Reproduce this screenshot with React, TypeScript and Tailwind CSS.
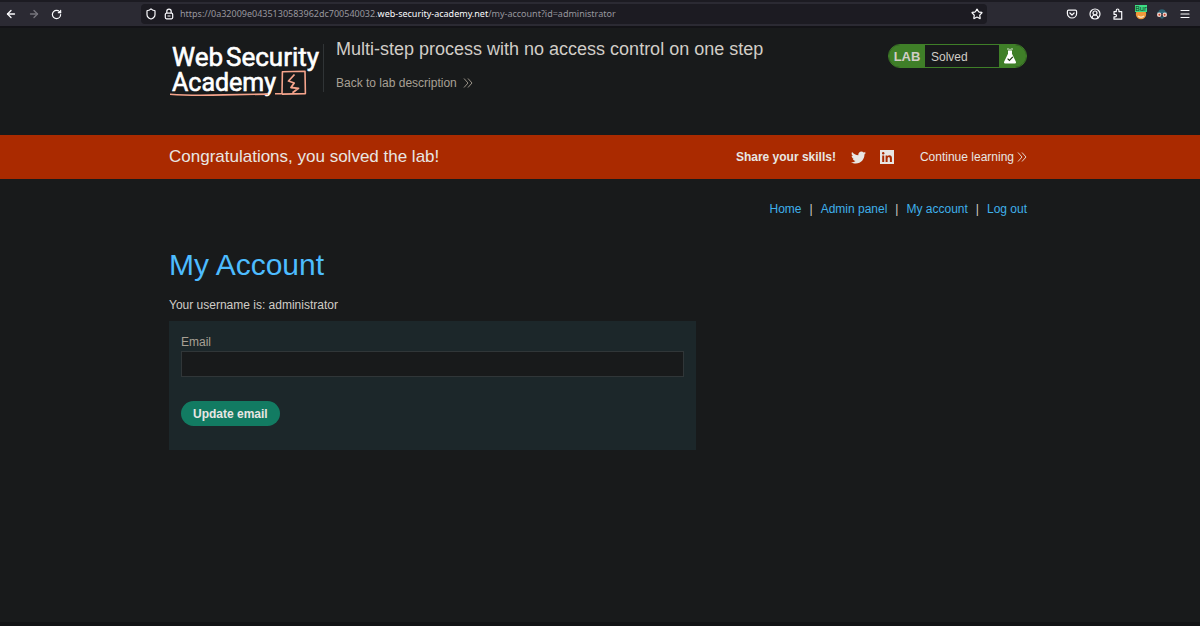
import React from 'react';
import { ArrowLeft, ArrowRight, CircleUserRound, Menu, RotateCw, Shield, Star } from 'lucide-react';
import { FaTwitter } from 'react-icons/fa';

const navLinks = ['Home', 'Admin panel', 'My account', 'Log out'];

const LockIcon = () => (
  <svg className="h-3 w-3" viewBox="0 0 12 12" fill="none" stroke="currentColor" strokeWidth="1.2">
    <rect x="2.3" y="5.2" width="7.4" height="5.6" rx="1.2" />
    <path d="M3.8 5V3.4a2.2 2.2 0 0 1 4.4 0V5M4.5 8h3" />
  </svg>
);

const PocketIcon = () => (
  <svg className="h-3 w-3" viewBox="0 0 12 12" fill="none" stroke="currentColor" strokeWidth="1.2" strokeLinecap="round" strokeLinejoin="round">
    <path d="M2.6 2.2h6.8q1.2 0 1.2 1.2v2a4.6 4.6 0 0 1-9.200 0v-2q0-1.200 1.200-1.200zM3.900 5 6 7l2.100-2" />
  </svg>
);

const ExtensionIcon = () => (
  <svg className="h-3 w-3" viewBox="0 0 12 12" fill="none" stroke="currentColor" strokeWidth="1.2" strokeLinejoin="round">
    <path d="M4.3 3.6V2.3a1.3 1.3 0 0 1 2.6 0v1.3h2.8v7.6H2V8.9h1.2a1.3 1.3 0 0 0 0-2.600H2V3.600z" />
  </svg>
);

const BurpIcon = () => (
  <svg className="h-4 w-4" viewBox="0 0 16 16">
    <circle cx="8" cy="9" r="5.2" fill="#f09a3a" />
    <path d="M5 11q3 2.4 6 0" fill="none" stroke="#f8dfb8" strokeWidth="1.6" />
    <rect x="2" width="12" height="7" fill="#3ddc84" />
    <text x="2.2" y="6" fontSize="7" fill="#12351f" fontFamily="Noto Sans, sans-serif">Bur</text>
  </svg>
);

const SpyIcon = () => (
  <svg className="h-3 w-3" viewBox="0 0 12 12">
    <path d="M2 5C2.400 2.200 4 1.200 6 1.200S9.600 2.200 10 5z" fill="#2b5f70" />
    <path d="M1 4.8h10" stroke="#37788c" />
    <path d="M3 8.4 6 11l3-2.6z" fill="#2b5f70" />
    <circle cx="3.2" cy="6.8" r="2.2" fill="#f4d8d0" />
    <circle cx="8.8" cy="6.8" r="2.2" fill="#f4d8d0" />
    <circle cx="3.4" cy="6.8" r="1" fill="#c4402a" />
    <circle cx="8.6" cy="6.8" r="1" fill="#c4402a" />
  </svg>
);

const Chevrons = () => (
  <svg className="h-3 w-[10px]" viewBox="0 0 10 12" fill="none" stroke="currentColor" strokeWidth="0.9">
    <path d="M1 1.5 5 6l-4 4.5M5 1.5 9 6l-4 4.5" />
  </svg>
);

const LinkedInIcon = () => (
  <svg className="h-[14px] w-[14px]" viewBox="0 0 14 14">
    <path d="M0 0h14v14H0z" fill="currentColor" />
    <path d="M2.2 5.4h2V12h-2zM5.6 5.4h1.9v.9q.7-1.1 2-1.100 2.400 0 2.400 2.900V12h-2V8.500q0-1.500-1.100-1.500-1.200 0-1.200 1.600V12h-2z" fill="#aa2a00" />
    <circle cx="3.2" cy="3.2" r="1.2" fill="#aa2a00" />
  </svg>
);

const Logo = () => (
  <svg className="h-[56px] w-[152px]" viewBox="0 0 152 56" role="img" aria-label="Web Security Academy">
    <g fill="#ffffff" stroke="#ffffff" strokeWidth="0.6" fontFamily="Roboto, sans-serif">
      <text x="3" y="24" fontSize="26">Web</text>
      <text x="57" y="24" fontSize="26">Security</text>
      <text x="3" y="49" fontSize="25">Academy</text>
    </g>
    <g fill="none" stroke="#f5a48c" strokeWidth="1.6" strokeLinejoin="round">
      <path d="M1 52.3c16 1.2 34 1.2 54 .6l44-.8M106 51.8h7l.4-22 22.600-.6.4 22.400-23.400.5" />
      <path d="m125.5 32.500-6 6.500 5.700 2-3.200 4.500 7.500.8-6 4.500" strokeWidth="1.8" />
    </g>
  </svg>
);

const Flask = () => (
  <svg className="h-4 w-[14px]" viewBox="0 0 14 16">
    <path d="M5 2.6h4v3.2l4 8.3q.3 1.4-.9 1.400H1.900q-1.200 0-.9-1.400l4-8.300z" fill="#fff" />
    <path d="M5 .2v1.6M7 .8v1.4M9 .2v1.6" stroke="#fff" strokeWidth="1" />
    <path d="m4.6 10.6 1.8 1.8 3.4-3.600" fill="none" stroke="#1d3a12" strokeWidth="1.2" />
  </svg>
);

const BrowserBar: React.FC = () => (
  <div className="flex h-7 items-center border-t-2 border-b-2 border-t-[#1c1b22] border-b-[#131317] bg-[#2b2a33] text-[#fbfbfe]">
    <div className="flex w-[141px] shrink-0 items-center gap-[11px] pl-[5px]">
      <button aria-label="Back"><ArrowLeft className="h-3 w-3" strokeWidth={2.6} /></button>
      <button aria-label="Forward" className="text-[#77767e]"><ArrowRight className="h-3 w-3" strokeWidth={2.6} /></button>
      <button aria-label="Reload"><RotateCw className="h-[11px] w-[11px]" strokeWidth={2.6} /></button>
    </div>
    <div className="flex h-5 min-w-0 flex-1 items-center rounded-sm bg-[#1c1b22] px-1">
      <Shield className="mr-1.5 h-3 w-3 shrink-0" strokeWidth={2.4} />
      <LockIcon />
      <div className="ml-[5px] flex-1 truncate font-['Noto_Sans',sans-serif] text-[9px] leading-4 text-[#98979e]">
        https://0a32009e0435130583962dc700540032.<span className="text-[#fbfbfe]">web-security-academy.net</span>/my-account?id=administrator
      </div>
      <button aria-label="Bookmark"><Star className="h-3 w-3" strokeWidth={2.4} /></button>
    </div>
    <div className="ml-[79px] flex shrink-0 items-center gap-[11px] pr-[9px]">
      <button aria-label="Pocket"><PocketIcon /></button>
      <button aria-label="Account"><CircleUserRound className="h-3 w-3" strokeWidth={2.4} /></button>
      <button aria-label="Extensions"><ExtensionIcon /></button>
      <button aria-label="Proxy" className="-mr-1 -ml-0.5 pb-0.5"><BurpIcon /></button>
      <button aria-label="Private mode"><SpyIcon /></button>
      <button aria-label="Menu"><Menu className="h-3 w-3" strokeWidth={2.4} /></button>
    </div>
  </div>
);

const LabStatus: React.FC = () => (
  <div className="mt-4 flex h-6 w-[139px] items-center overflow-hidden rounded-full border border-[#3f7f28] text-[#d1cdc7]">
    <span className="flex h-full w-9 items-center justify-center bg-[#3f7f28] pt-0.5 text-[13px] font-bold">LAB</span>
    <span className="flex-1 pt-px pl-1.5 text-[12px]">Solved</span>
    <span className="flex h-full w-[27px] items-center bg-[#3f7f28] pl-1"><Flask /></span>
  </div>
);

const App: React.FC = () => {
  return (
    <div className="flex min-h-screen flex-col border-b-4 border-[#121315] bg-[#181a1b] font-['Liberation_Sans',Arial,sans-serif] text-[12px] leading-4 text-[#d1cdc7]">
      <BrowserBar />

      <header className="h-[107px] pr-1">
        <div className="mx-auto flex max-w-[858px] items-start">
          <a href="#" className="mt-[14px]"><Logo /></a>
          <div className="mt-4 ml-0.5 h-12 border-l border-[#303436]" />
          <div className="ml-3 flex-1 pt-[7px]">
            <h2 className="text-[18px] leading-7">Multi-step process with no access control on one step</h2>
            <a href="#" className="mt-3 flex items-center gap-1.5 text-[#a8a095]">
              Back to lab description <Chevrons />
            </a>
          </div>
          <LabStatus />
        </div>
      </header>

      <section className="bg-[#aa2a00] pr-1 text-[#e8e6e3]">
        <div className="mx-auto flex h-11 max-w-[858px] items-center">
          <h4 className="flex-1 text-[17px]">Congratulations, you solved the lab!</h4>
          <span className="font-bold">Share your skills!</span>
          <a href="#" aria-label="Twitter" className="ml-[15px]"><FaTwitter className="h-[15px] w-[15px]" /></a>
          <a href="#" aria-label="LinkedIn" className="ml-[14px]"><LinkedInIcon /></a>
          <a href="#" className="ml-[26px] flex items-center gap-[3px]">Continue learning <Chevrons /></a>
        </div>
      </section>

      <main className="pr-1">
        <div className="mx-auto max-w-[858px]">
          <nav className="flex justify-end pt-[22px]">
            {navLinks.map((link, idx) => (
              <React.Fragment key={link}>
                {idx > 0 && <span className="px-2">|</span>}
                <a href="#" className="text-[#3fb0ea]">{link}</a>
              </React.Fragment>
            ))}
          </nav>

          <h1 className="mt-7 text-[30px] leading-10 text-[#4dbcff]">My Account</h1>
          <p className="mt-3">Your username is: administrator</p>

          <form className="mt-2 max-w-[527px] bg-[#1c272a] px-3 pt-[13px] pb-6" onSubmit={(e) => e.preventDefault()}>
            <label htmlFor="email" className="block text-[#a8a095]">Email</label>
            <input id="email" type="email" className="mt-px block h-[26px] w-full border border-[#303638] bg-[#181a1b] px-2 outline-none" />
            <button type="submit" className="mt-6 h-[25px] rounded-full bg-[#127b62] px-3 font-bold text-[#e8e6e3]">
              Update email
            </button>
          </form>
        </div>
      </main>
    </div>
  );
};

export default App;
